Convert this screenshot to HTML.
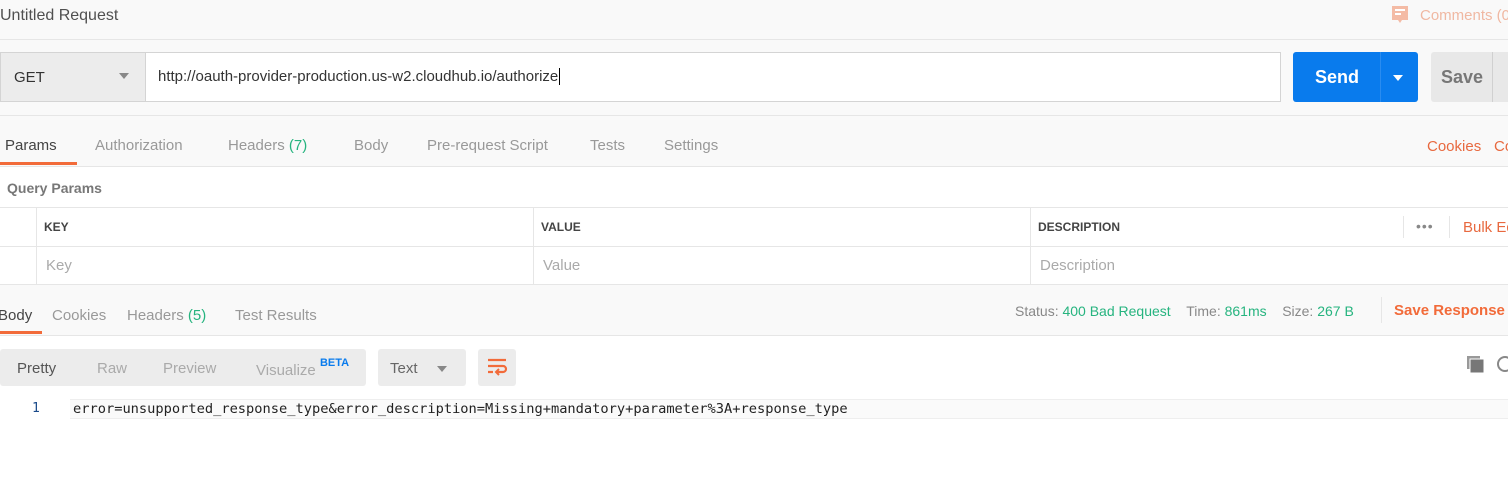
<!DOCTYPE html>
<html><head><style>
*{margin:0;padding:0;box-sizing:border-box}
body{width:1508px;height:480px;overflow:hidden;background:#fff;font-family:"Liberation Sans",sans-serif;position:relative;color:#505050}
.a{position:absolute;white-space:nowrap}
</style></head><body>
<div class="a" style="left:0;top:0;width:1508px;height:40px;background:#f9f9f9;border-bottom:1px solid #e6e6e6"></div>
<div class="a" style="left:0;top:7px;font-size:16px;color:#505050">Untitled Request</div>
<svg class="a" style="left:1390px;top:5px" width="20" height="20" viewBox="0 0 20 20"><path d="M2 1h16v14h-6l-2 3-2-3H2z" fill="#f4bba5"/><path d="M5 5h10M5 9h6" stroke="#fff" stroke-width="2"/></svg>
<div class="a" style="left:1420px;top:7px;font-size:15px;color:#f0b8a2">Comments (0</div>
<div class="a" style="left:0;top:40px;width:1508px;height:76px;background:#f9f9f9;border-bottom:1px solid #e6e6e6"></div>
<div class="a" style="left:0;top:52px;width:146px;height:50px;background:#ececec;border:1px solid #d4d4d4;border-right:none"></div>
<div class="a" style="left:14px;top:69px;font-size:15px;color:#333">GET</div>
<div class="a" style="left:119px;top:73px;width:0;height:0;border-left:5px solid transparent;border-right:5px solid transparent;border-top:6px solid #888"></div>
<div class="a" style="left:145px;top:52px;width:1136px;height:50px;background:#fff;border:1px solid #d4d4d4"></div>
<div class="a" style="left:158px;top:68px;font-size:15px;color:#333">http://oauth-provider-production.us-w2.cloudhub.io/authorize<span style="border-left:1px solid #000;margin-left:1px"></span></div>
<div class="a" style="left:1293px;top:52px;width:125px;height:50px;background:#097bed;border-radius:3px"></div>
<div class="a" style="left:1380px;top:52px;width:1px;height:50px;background:#2a8cf0"></div>
<div class="a" style="left:1315px;top:67px;font-size:18px;font-weight:bold;color:#fff">Send</div>
<div class="a" style="left:1393px;top:75px;width:0;height:0;border-left:5px solid transparent;border-right:5px solid transparent;border-top:6px solid #fff"></div>
<div class="a" style="left:1431px;top:52px;width:80px;height:50px;background:#e8e8e8;border-radius:3px"></div>
<div class="a" style="left:1492px;top:52px;width:1px;height:50px;background:#d0d0d0"></div>
<div class="a" style="left:1441px;top:67px;font-size:18px;font-weight:bold;color:#777">Save</div>
<div class="a" style="left:0;top:116px;width:1508px;height:51px;background:#f9f9f9;border-bottom:1px solid #e6e6e6"></div>
<div class="a" style="left:0;top:137px;font-size:15px;color:#999;word-spacing:0">
<span class="a" style="left:5px;color:#444">Params</span><span class="a" style="left:95px">Authorization</span><span class="a" style="left:228px">Headers <span style="color:#26b47f">(7)</span></span><span class="a" style="left:354px">Body</span><span class="a" style="left:427px">Pre-request Script</span><span class="a" style="left:590px">Tests</span><span class="a" style="left:664px">Settings</span></div>
<div class="a" style="left:0;top:162px;width:77px;height:3px;background:#f26b3a"></div>
<div class="a" style="left:1427px;top:138px;font-size:15px;color:#e8693f">Cookies</div>
<div class="a" style="left:1494px;top:138px;font-size:15px;color:#e8693f">Co</div>
<div class="a" style="left:7px;top:180px;font-size:14px;font-weight:bold;color:#777">Query Params</div>
<div class="a" style="left:0;top:207px;width:1508px;height:78px;border-top:1px solid #e6e6e6;border-bottom:1px solid #e6e6e6"></div>
<div class="a" style="left:0;top:246px;width:1508px;height:1px;background:#e6e6e6"></div>
<div class="a" style="left:36px;top:207px;width:1px;height:78px;background:#e6e6e6"></div>
<div class="a" style="left:533px;top:207px;width:1px;height:78px;background:#e6e6e6"></div>
<div class="a" style="left:1030px;top:207px;width:1px;height:78px;background:#e6e6e6"></div>
<div class="a" style="left:1403px;top:216px;width:1px;height:22px;background:#e6e6e6"></div>
<div class="a" style="left:1449px;top:216px;width:1px;height:22px;background:#e6e6e6"></div>
<div class="a" style="left:44px;top:220px;font-size:12px;font-weight:bold;color:#444">KEY</div>
<div class="a" style="left:541px;top:220px;font-size:12px;font-weight:bold;color:#444">VALUE</div>
<div class="a" style="left:1038px;top:220px;font-size:12px;font-weight:bold;color:#444">DESCRIPTION</div>
<div class="a" style="left:1416px;top:218px;font-size:14px;color:#888;letter-spacing:1px">•••</div>
<div class="a" style="left:1463px;top:219px;font-size:15px;color:#e8693f">Bulk Ed</div>
<div class="a" style="left:46px;top:257px;font-size:15px;color:#aaa">Key</div>
<div class="a" style="left:543px;top:257px;font-size:15px;color:#aaa">Value</div>
<div class="a" style="left:1040px;top:257px;font-size:15px;color:#aaa">Description</div>
<div class="a" style="left:0;top:285px;width:1508px;height:51px;background:#f9f9f9;border-bottom:1px solid #e6e6e6"></div>
<div class="a" style="left:0;top:307px;font-size:15px;color:#999">
<span class="a" style="left:-2px;color:#444">Body</span><span class="a" style="left:52px">Cookies</span><span class="a" style="left:127px">Headers <span style="color:#26b47f">(5)</span></span><span class="a" style="left:235px">Test Results</span></div>
<div class="a" style="left:0;top:331px;width:42px;height:3px;background:#f26b3a"></div>
<div class="a" style="left:1015px;top:303px;font-size:14px;color:#888">Status: <span style="color:#26b47f">400 Bad Request</span> &nbsp; &nbsp;Time: <span style="color:#26b47f">861ms</span> &nbsp; &nbsp;Size: <span style="color:#26b47f">267 B</span></div>
<div class="a" style="left:1381px;top:297px;width:1px;height:26px;background:#e6e6e6"></div>
<div class="a" style="left:1394px;top:302px;font-size:15px;font-weight:bold;color:#f26b3a">Save Response</div>
<div class="a" style="left:0;top:349px;width:366px;height:37px;background:#ececec;border-radius:3px"></div>
<div class="a" style="left:17px;top:360px;font-size:15px;color:#555">Pretty</div>
<div class="a" style="left:97px;top:360px;font-size:15px;color:#aaa">Raw</div>
<div class="a" style="left:163px;top:360px;font-size:15px;color:#aaa">Preview</div>
<div class="a" style="left:256px;top:360px;font-size:15px;color:#aaa">Visualize <sup style="font-size:11px;font-weight:bold;color:#097bed;position:relative;top:-3px">BETA</sup></div>
<div class="a" style="left:378px;top:349px;width:88px;height:37px;background:#ececec;border-radius:3px"></div>
<div class="a" style="left:390px;top:360px;font-size:15px;color:#666">Text</div>
<div class="a" style="left:437px;top:366px;width:0;height:0;border-left:5px solid transparent;border-right:5px solid transparent;border-top:6px solid #888"></div>
<div class="a" style="left:478px;top:349px;width:38px;height:37px;background:#ececec;border-radius:3px"></div>
<svg class="a" style="left:486px;top:357px" width="22" height="20" viewBox="0 0 22 20"><path d="M2 3h18M2 9h15a3 3 0 0 1 0 6h-6M2 15h5" stroke="#f26b3a" stroke-width="2.2" fill="none"/><path d="M13 12l-3 3 3 3" stroke="#f26b3a" stroke-width="2" fill="none"/></svg>
<svg class="a" style="left:1466px;top:355px" width="20" height="20" viewBox="0 0 20 20"><rect x="1" y="1" width="13" height="13" fill="#999"/><rect x="4" y="4" width="14" height="14" fill="#777" stroke="#fff" stroke-width="1"/></svg>
<div class="a" style="left:1497px;top:356px;width:16px;height:16px;border:2px solid #888;border-radius:50%"></div>
<div class="a" style="left:70px;top:399px;width:1438px;height:20px;background:#fafafa;border-top:1px solid #eee;border-bottom:1px solid #eee"></div>
<div class="a" style="left:32px;top:401px;font-family:'DejaVu Sans Mono','Liberation Mono',monospace;font-size:13px;color:#1a4a8a">1</div>
<div class="a" style="left:73px;top:401px;font-family:'DejaVu Sans Mono','Liberation Mono',monospace;font-size:13.7px;color:#222">error=unsupported_response_type&amp;error_description=Missing+mandatory+parameter%3A+response_type</div>
</body></html>
